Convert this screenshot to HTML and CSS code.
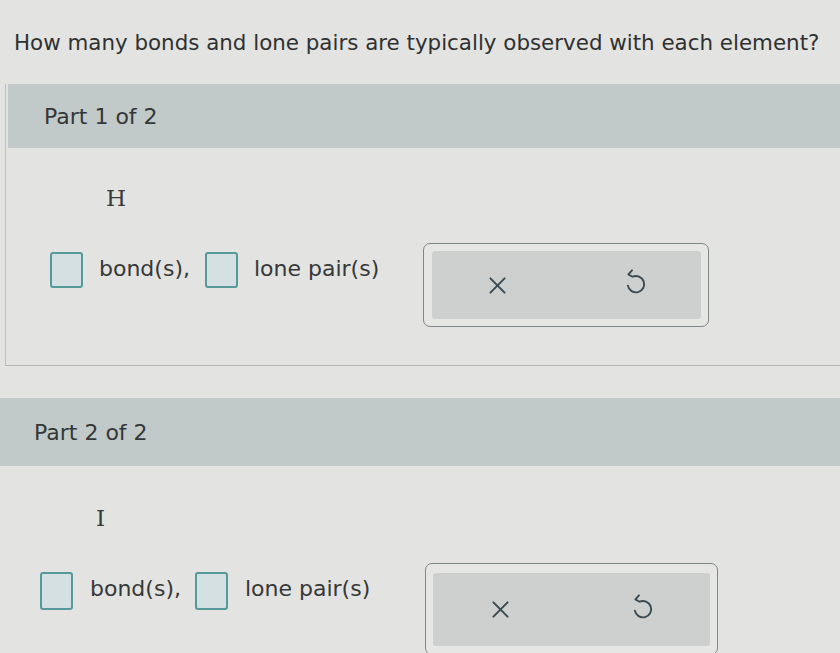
FILE: index.html
```html
<!DOCTYPE html>
<html lang="en">
<head>
<meta charset="utf-8">
<title>Bonds and lone pairs</title>
<link rel="stylesheet" href="styles.css">
</head>
<body>
<h1 class="question">How many bonds and lone pairs are typically observed with each element?</h1>

<section class="part part-1">
  <div class="part-header">Part 1 of 2</div>
  <div class="part-body">
    <div class="element">H</div>
    <div class="answer-row">
      <span class="answer-box"></span>
      <span class="answer-label">bond(s),</span>
      <span class="answer-box"></span>
      <span class="answer-label">lone pair(s)</span>
      <div class="tools">
        <div class="tools-inner">
          <button class="tool tool-clear" aria-label="Clear">
            <svg class="icon-x" viewBox="0 0 18 18"><path d="M1.5 1.5 L16.5 16.5 M16.5 1.5 L1.5 16.5" stroke="#3b4a52" stroke-width="2.1" fill="none" stroke-linecap="round"/></svg>
          </button>
          <button class="tool" aria-label="Undo">
            <svg class="icon-undo" viewBox="0 0 22 28"><path d="M6.6 1.2 L2.6 5.6 L7.2 8.2 A9 9 0 1 1 2.1 18" stroke="#3b4a52" stroke-width="2.1" fill="none" stroke-linecap="round" stroke-linejoin="round"/></svg>
          </button>
        </div>
      </div>
    </div>
  </div>
</section>

<section class="part part-2">
  <div class="part-header">Part 2 of 2</div>
  <div class="part-body">
    <div class="element">I</div>
    <div class="answer-row">
      <span class="answer-box"></span>
      <span class="answer-label">bond(s),</span>
      <span class="answer-box"></span>
      <span class="answer-label">lone pair(s)</span>
      <div class="tools">
        <div class="tools-inner">
          <button class="tool tool-clear" aria-label="Clear">
            <svg class="icon-x" viewBox="0 0 18 18"><path d="M1.5 1.5 L16.5 16.5 M16.5 1.5 L1.5 16.5" stroke="#3b4a52" stroke-width="2.1" fill="none" stroke-linecap="round"/></svg>
          </button>
          <button class="tool" aria-label="Undo">
            <svg class="icon-undo" viewBox="0 0 22 28"><path d="M6.6 1.2 L2.6 5.6 L7.2 8.2 A9 9 0 1 1 2.1 18" stroke="#3b4a52" stroke-width="2.1" fill="none" stroke-linecap="round" stroke-linejoin="round"/></svg>
          </button>
        </div>
      </div>
    </div>
  </div>
</section>
</body>
</html>
```

FILE: styles.css
```css
html, body {
  margin: 0;
  padding: 0;
  background: #e3e3e1;
  height: 100%;
  overflow: hidden;
}

body {
  font-family: "DejaVu Sans", Verdana, sans-serif;
  color: #363838;
}

.question {
  margin: 30px 0 0 14px;
  font-size: 21.4px;
  line-height: 26px;
  font-weight: normal;
  color: #2f3131;
  white-space: nowrap;
}

.part {
  display: flex;
  flex-direction: column;
}

.part-1 {
  margin: 28px 0 0 5px;
  border-left: 1px solid #bcc0c0;
  border-bottom: 1px solid #b4b8b8;
}

.part-2 {
  margin-top: 32px;
}

.part-header {
  background: #c2cac9;
  height: 64px;
  display: flex;
  align-items: center;
  font-size: 22px;
  color: #343737;
}

.part-1 .part-header {
  margin-left: 2px;
  padding-left: 36px;
}

.part-2 .part-header {
  height: 68px;
  padding-left: 34px;
}

.part-body {
  display: flex;
  flex-direction: column;
  gap: 32px;
}

.part-1 .part-body {
  padding: 37px 0 38px 44px;
}

.part-2 .part-body {
  padding: 39px 0 0 40px;
}

.element {
  font-family: "DejaVu Serif", "Liberation Serif", serif;
  font-size: 23px;
  line-height: 26px;
  color: #3a3c3c;
  padding-left: 56px;
}

.part-2 .element {
  padding-left: 56px;
}

.answer-row {
  display: flex;
  align-items: flex-start;
}

.answer-box {
  box-sizing: border-box;
  width: 33px;
  height: 36px;
  margin-top: 9px;
  border: 2px solid #55999b;
  border-radius: 3px;
  background: #d4e0e2;
  flex: none;
}

.part-2 .answer-box {
  height: 38px;
}

.answer-label {
  font-size: 22px;
  line-height: 36px;
  margin-top: 8px;
  padding: 0 15px 0 16px;
  color: #363838;
  white-space: nowrap;
}

.part-2 .answer-label {
  padding: 0 14px 0 17px;
}

.tools {
  box-sizing: border-box;
  margin-left: 29px;
  width: 286px;
  height: 84px;
  padding: 7px 7px 7px 8px;
  border: 1.5px solid #7f8788;
  border-radius: 7px;
  background: #e6e6e4;
  flex: none;
}

.part-2 .tools {
  margin-left: 41px;
  width: 293px;
  height: 92px;
  padding: 9px 7px 8px 7px;
}

.tools-inner {
  height: 100%;
  display: flex;
  background: #cdd0cf;
  border-radius: 3px;
}

.tool {
  flex: 1;
  border: none;
  background: transparent;
  display: flex;
  align-items: center;
  justify-content: center;
  padding: 0;
  margin: 0;
}

.tool-clear {
  padding-right: 8px;
}

.icon-x {
  display: block;
  width: 17px;
  height: 17px;
}

.icon-undo {
  display: block;
  width: 20px;
  height: 26px;
  margin-top: -6px;
}
```
